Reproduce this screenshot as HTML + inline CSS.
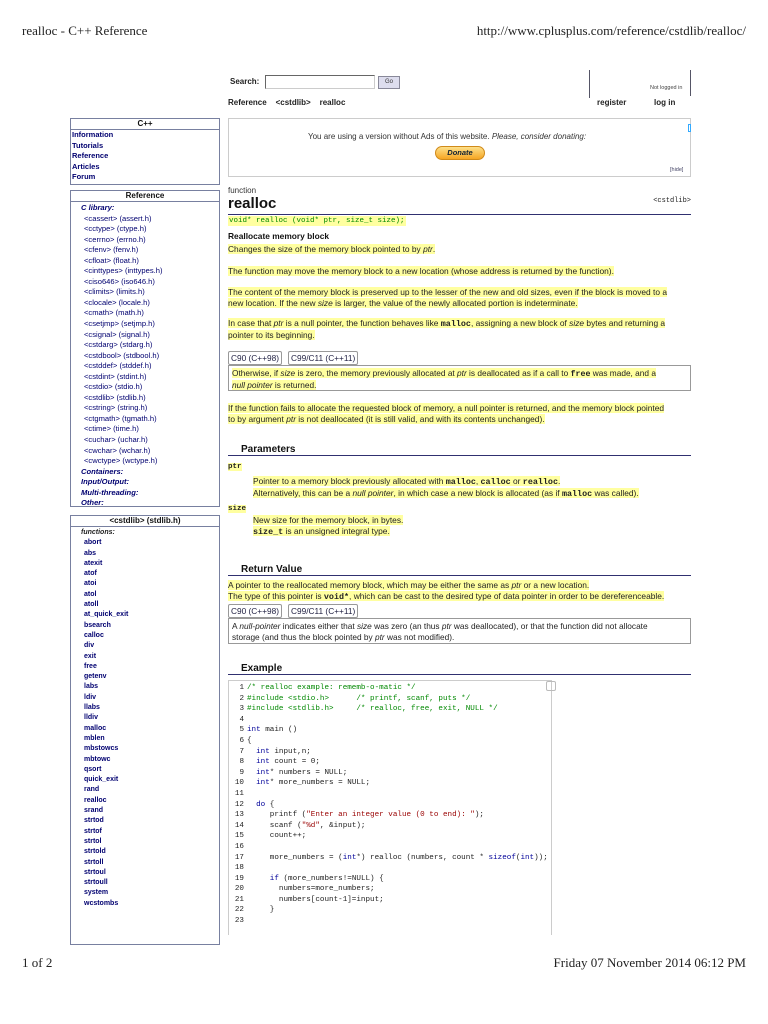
<!DOCTYPE html>
<html><head><meta charset="utf-8"><style>
*{margin:0;padding:0;box-sizing:border-box}
body{width:768px;height:1024px;background:#fff;position:relative;font-family:"Liberation Sans",sans-serif;color:#222;overflow:hidden}
.a{position:absolute;white-space:nowrap}
.ser{font-family:"Liberation Serif",serif;font-size:13px;color:#222}
.box{position:absolute;left:70px;width:150px;border:1px solid #7880a0;font-size:7.5px;font-weight:bold;color:#000070}
.box .h{text-align:center;color:#111;border-bottom:1px solid #7880a0;height:11px;line-height:10px;font-size:8px}
.box div.i{height:10.5px;line-height:10.5px;padding-left:2px}
.m{font-size:8.4px;color:#222;left:228px}
.hl{background:#ffffa0}
.mono{font-family:"Liberation Mono",monospace}
.hd{position:absolute;left:228px;width:463px;border-bottom:1px solid #303070;font-size:10px;font-weight:bold;padding-left:13px;color:#111;height:12px}
.tab{position:absolute;border:1px solid #999;border-radius:2px;font-size:8.3px;color:#224;padding:1px 2px;background:#fff;height:14px;line-height:11px}
.tb{position:absolute;left:228px;width:463px;border:1px solid #999;font-size:8.3px;padding:2px 3px;line-height:11px}
.code{position:absolute;left:228px;top:680px;width:324px;height:255px;border:1px solid #ccc;border-bottom:none;font-family:"Liberation Mono",monospace;font-size:7.6px;line-height:10.6px;padding-top:2px}
.code .ln{position:absolute;left:0;width:15px;text-align:right;color:#222}
.code .c{position:absolute;left:18px;white-space:pre}
.g{color:#080}.k{color:#009}.s{color:#900}
</style></head><body>
<div class="a ser" style="left:22px;top:23px">realloc - C++ Reference</div>
<div class="a ser" style="right:22px;top:23px">http://www.cplusplus.com/reference/cstdlib/realloc/</div>
<div class="a ser" style="left:22px;top:955px">1 of 2</div>
<div class="a ser" style="right:22px;top:955px">Friday 07 November 2014 06:12 PM</div>

<div class="a" style="left:230px;top:77px;font-size:8px;font-weight:bold">Search:</div>
<div class="a" style="left:265px;top:75px;width:110px;height:14px;border:1px solid #666;border-right-color:#ccc;border-bottom-color:#ccc"></div>
<div class="a" style="left:378px;top:76px;width:22px;height:13px;border:1px solid #889;background:#dde;font-size:6px;text-align:center;line-height:11px;color:#333">Go</div>
<div class="a" style="left:589px;top:70px;width:1px;height:28px;background:#556"></div>
<div class="a" style="left:690px;top:70px;width:1px;height:26px;background:#556"></div>
<div class="a" style="left:650px;top:85px;font-size:5.5px;color:#444">Not logged in</div>
<div class="a" style="left:228px;top:98px;font-size:8px;font-weight:bold;color:#222">Reference&nbsp;&nbsp;&nbsp; &lt;cstdlib&gt;&nbsp;&nbsp;&nbsp; realloc</div>
<div class="a" style="left:597px;top:98px;font-size:8px;font-weight:bold;color:#222">register</div>
<div class="a" style="left:654px;top:98px;font-size:8px;font-weight:bold;color:#222">log in</div>

<div class="box" style="top:118px;height:67px"><div class="h">C++</div>
<div class="i" style="padding-left:1px">Information</div><div class="i" style="padding-left:1px">Tutorials</div><div class="i" style="padding-left:1px">Reference</div><div class="i" style="padding-left:1px">Articles</div><div class="i" style="padding-left:1px">Forum</div></div>

<div class="box" style="top:190px;height:317px;font-weight:normal"><div class="h" style="font-weight:bold">Reference</div>
<div style="font-size:7.6px;line-height:10.55px;padding-top:1px">
<div style="padding-left:10px;font-style:italic;font-weight:bold">C library:</div>
<div style="padding-left:13px">&lt;cassert&gt; (assert.h)<br>&lt;cctype&gt; (ctype.h)<br>&lt;cerrno&gt; (errno.h)<br>&lt;cfenv&gt; (fenv.h)<br>&lt;cfloat&gt; (float.h)<br>&lt;cinttypes&gt; (inttypes.h)<br>&lt;ciso646&gt; (iso646.h)<br>&lt;climits&gt; (limits.h)<br>&lt;clocale&gt; (locale.h)<br>&lt;cmath&gt; (math.h)<br>&lt;csetjmp&gt; (setjmp.h)<br>&lt;csignal&gt; (signal.h)<br>&lt;cstdarg&gt; (stdarg.h)<br>&lt;cstdbool&gt; (stdbool.h)<br>&lt;cstddef&gt; (stddef.h)<br>&lt;cstdint&gt; (stdint.h)<br>&lt;cstdio&gt; (stdio.h)<br>&lt;cstdlib&gt; (stdlib.h)<br>&lt;cstring&gt; (string.h)<br>&lt;ctgmath&gt; (tgmath.h)<br>&lt;ctime&gt; (time.h)<br>&lt;cuchar&gt; (uchar.h)<br>&lt;cwchar&gt; (wchar.h)<br>&lt;cwctype&gt; (wctype.h)</div>
<div style="padding-left:10px;font-style:italic;font-weight:bold">Containers:<br>Input/Output:<br>Multi-threading:<br>Other:</div></div></div>

<div class="box" style="top:515px;height:430px"><div class="h">&lt;cstdlib&gt; (stdlib.h)</div>
<div style="font-size:7px;line-height:10.3px;padding-top:1px">
<div style="padding-left:10px;font-style:italic;color:#222">functions:</div>
<div style="padding-left:13px">abort<br>abs<br>atexit<br>atof<br>atoi<br>atol<br>atoll<br>at_quick_exit<br>bsearch<br>calloc<br>div<br>exit<br>free<br>getenv<br>labs<br>ldiv<br>llabs<br>lldiv<br>malloc<br>mblen<br>mbstowcs<br>mbtowc<br>qsort<br>quick_exit<br>rand<br>realloc<br>srand<br>strtod<br>strtof<br>strtol<br>strtold<br>strtoll<br>strtoul<br>strtoull<br>system<br>wcstombs</div></div></div>

<div class="a" style="left:228px;top:118px;width:463px;height:59px;border:1px solid #ccc"></div>
<div class="a" style="left:308px;top:132px;font-size:8px;color:#333">You are using a version without Ads of this website. <i>Please, consider donating:</i></div>
<div class="a" style="left:435px;top:146px;width:50px;height:14px;border-radius:7px;background:linear-gradient(#fde08a,#f6a623);border:1px solid #d08a1a;font-size:7.5px;font-weight:bold;font-style:italic;color:#123;text-align:center;line-height:12px">Donate</div>
<div class="a" style="left:670px;top:167px;font-size:5.5px;color:#446">[hide]</div>
<div class="a" style="left:688px;top:124px;width:3px;height:8px;border:1px solid #3af"></div>

<div class="a" style="left:228px;top:186px;font-size:8px;color:#333">function</div>
<div class="a" style="left:228px;top:195px;font-size:15px;font-weight:bold;color:#111">realloc</div>
<div class="a mono" style="right:77px;top:197px;font-size:7px;color:#222">&lt;cstdlib&gt;</div>
<div class="a" style="left:228px;top:214px;width:463px;height:1px;background:#303070"></div>
<div class="a mono hl" style="left:228px;top:216px;font-size:7.5px;color:#080;padding:1px 1px">void* realloc (void* ptr, size_t size);</div>
<div class="a" style="left:228px;top:231px;font-size:8.4px;font-weight:bold;color:#111">Reallocate memory block</div>
<div class="a m" style="top:244px"><span class="hl">Changes the size of the memory block pointed to by <i>ptr</i>.</span></div>
<div class="a m" style="top:266px"><span class="hl">The function may move the memory block to a new location (whose address is returned by the function).</span></div>
<div class="a m" style="top:287px;line-height:11px"><span class="hl">The content of the memory block is preserved up to the lesser of the new and old sizes, even if the block is moved to a</span><br><span class="hl">new location. If the new <i>size</i> is larger, the value of the newly allocated portion is indeterminate.</span></div>
<div class="a m" style="top:318px;line-height:11px"><span class="hl">In case that <i>ptr</i> is a null pointer, the function behaves like <b class="mono">malloc</b>, assigning a new block of <i>size</i> bytes and returning a</span><br><span class="hl">pointer to its beginning.</span></div>
<div class="tab" style="left:228px;top:351px">C90 (C++98)</div>
<div class="tab" style="left:288px;top:351px">C99/C11 (C++11)</div>
<div class="tb" style="top:365px;height:26px"><span class="hl">Otherwise, if <i>size</i> is zero, the memory previously allocated at <i>ptr</i> is deallocated as if a call to <b class="mono">free</b> was made, and a</span><br><span class="hl"><i>null pointer</i> is returned.</span></div>
<div class="a m" style="top:403px;line-height:11px"><span class="hl">If the function fails to allocate the requested block of memory, a null pointer is returned, and the memory block pointed</span><br><span class="hl">to by argument <i>ptr</i> is not deallocated (it is still valid, and with its contents unchanged).</span></div>

<div class="hd" style="top:444px">Parameters</div>
<div class="a mono hl" style="left:228px;top:463px;font-size:7.5px;font-weight:bold">ptr</div>
<div class="a m" style="left:253px;top:476px;line-height:11px"><span class="hl">Pointer to a memory block previously allocated with <b class="mono">malloc</b>, <b class="mono">calloc</b> or <b class="mono">realloc</b>.</span><br><span class="hl">Alternatively, this can be a <i>null pointer</i>, in which case a new block is allocated (as if <b class="mono">malloc</b> was called).</span></div>
<div class="a mono hl" style="left:228px;top:505px;font-size:7.5px;font-weight:bold">size</div>
<div class="a m" style="left:253px;top:515px;line-height:11px"><span class="hl">New size for the memory block, in bytes.</span><br><span class="hl"><b class="mono">size_t</b> is an unsigned integral type.</span></div>

<div class="hd" style="top:564px">Return Value</div>
<div class="a m" style="top:580px;line-height:11px"><span class="hl">A pointer to the reallocated memory block, which may be either the same as <i>ptr</i> or a new location.</span><br><span class="hl">The type of this pointer is <b class="mono">void*</b>, which can be cast to the desired type of data pointer in order to be dereferenceable.</span></div>
<div class="tab" style="left:228px;top:604px">C90 (C++98)</div>
<div class="tab" style="left:288px;top:604px">C99/C11 (C++11)</div>
<div class="tb" style="top:618px;height:26px">A <i>null-pointer</i> indicates either that <i>size</i> was zero (an thus <i>ptr</i> was deallocated), or that the function did not allocate<br>storage (and thus the block pointed by <i>ptr</i> was not modified).</div>

<div class="hd" style="top:663px">Example</div>
<div class="code">
<div class="ln" style="top:2px;line-height:10.6px">1<br>2<br>3<br>4<br>5<br>6<br>7<br>8<br>9<br>10<br>11<br>12<br>13<br>14<br>15<br>16<br>17<br>18<br>19<br>20<br>21<br>22<br>23</div>
<div class="c" style="top:2px"><span class="g">/* realloc example: rememb-o-matic */</span>
<span class="g">#include &lt;stdio.h&gt;      /* printf, scanf, puts */</span>
<span class="g">#include &lt;stdlib.h&gt;     /* realloc, free, exit, NULL */</span>

<span class="k">int</span> main ()
{
  <span class="k">int</span> input,n;
  <span class="k">int</span> count = 0;
  <span class="k">int</span>* numbers = NULL;
  <span class="k">int</span>* more_numbers = NULL;

  <span class="k">do</span> {
     printf (<span class="s">"Enter an integer value (0 to end): "</span>);
     scanf (<span class="s">"%d"</span>, &amp;input);
     count++;

     more_numbers = (<span class="k">int</span>*) realloc (numbers, count * <span class="k">sizeof</span>(<span class="k">int</span>));

     <span class="k">if</span> (more_numbers!=NULL) {
       numbers=more_numbers;
       numbers[count-1]=input;
     }
</div>
<div class="a" style="left:317px;top:0px;width:10px;height:10px;border:1px solid #bbb;border-radius:2px"></div>
</div>
</body></html>
